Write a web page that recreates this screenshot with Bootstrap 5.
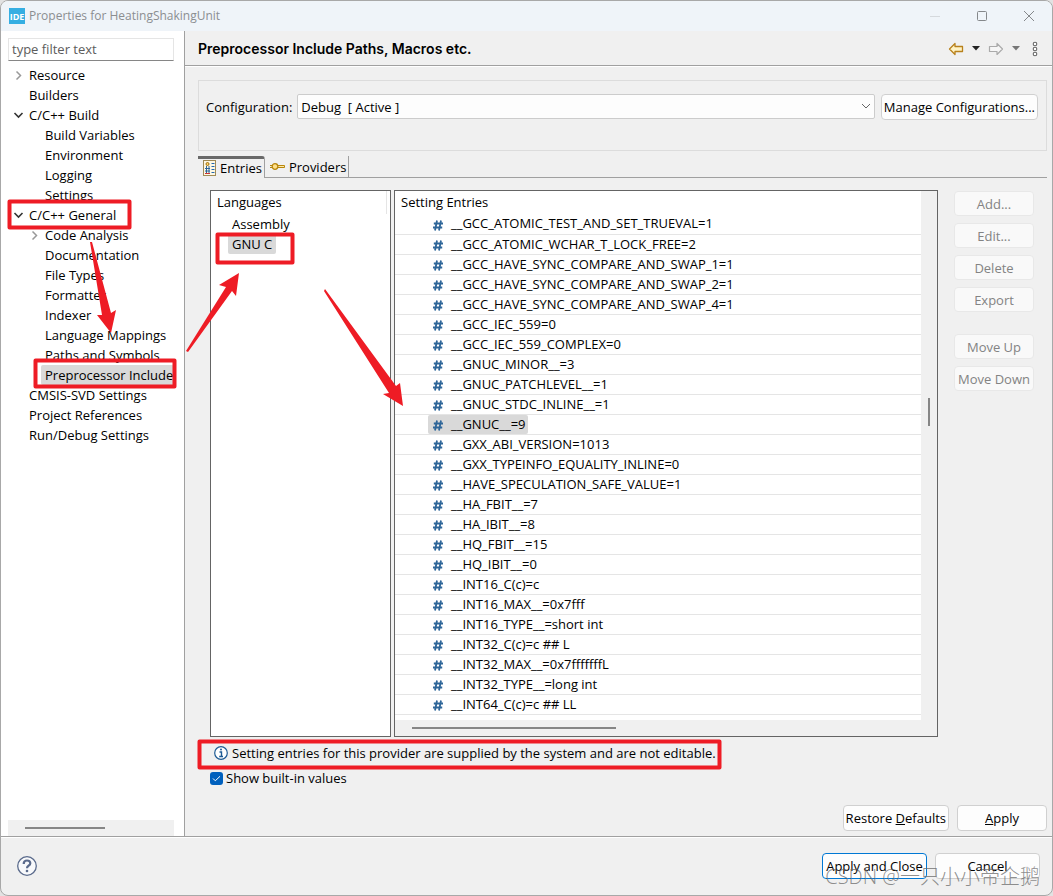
<!DOCTYPE html>
<html lang="en">
<head>
<meta charset="utf-8">
<meta name="viewport" content="width=device-width, initial-scale=1">
<title>Properties for HeatingShakingUnit</title>
<link href="https://cdn.jsdelivr.net/npm/bootstrap@5.3.0/dist/css/bootstrap.min.css" rel="stylesheet">
<style>
body{font:13px/20px "Open Sans","Noto Sans CJK SC",sans-serif;color:#000;background:#e2e2e2}
.dialog{min-height:100vh;background:#f0f0f0;border:1px solid #a8a8a8;border-radius:8px;overflow:hidden}
.titlebar{height:30px;background:#eff4f9;color:#8b8e91;font-size:12px;padding:0 17px 0 8px}
.ide{width:16px;height:16px;background:#35aee2}
.winbtns{gap:35px}
.winbtns button,.toolbtns button{border:0;background:none;padding:0;display:flex;align-items:center;justify-content:center}
.side{width:184px;background:#fff;border-right:1px solid #a0a0a0;padding:7px 10px 0 7px}
.filter{height:23px;border:1px solid #e5e5e5;border-bottom-color:#868686;padding:0 3px 1px;width:100%;color:#000}
.filter::placeholder{color:#5c5c5c;opacity:1}
.tree,.tree ul,.langs{list-style:none;margin:0;padding:0}
.tree{margin-top:4px;white-space:nowrap}
.tree a{display:flex;align-items:center;height:20px;color:#000;text-decoration:none;padding-left:4px}
.tree ul a{padding-left:20px}
.tree svg,.tree i{width:13px;height:12px;margin-right:4px;flex:none}
.tree ul .picked{padding-left:0;margin-left:33px}
.picked span{background:#d9d9d9;border-radius:2px}
.tree .picked span{padding:0 4px;width:100%;overflow:hidden}
.hbar{height:16px;background:#f0f0f0;padding:7px 17px}
.hbar div{height:2px;background:#868686}
.main-head{height:35px;border-bottom:1px solid #a0a0a0;box-shadow:0 1px #fff;padding:1px 14px 0 13px}
.main-head h1{font:600 14px/20px Inter,sans-serif;margin:0}
.content{padding:14px 5px 5px 13px}
.cfg{border:1px solid #dcdcdc;height:71px;padding:0 8px 18px 7px}
.cfg select{height:25px;border:1px solid #ccc;border-radius:2px;background:#fdfdfd;padding:0 0 0 3px;appearance:none;width:100%}
.pick{margin:0 6px 0 5px}
.pick svg{position:absolute;right:4px;top:8px;pointer-events:none}
.push{height:26px;border:1px solid #d0d0d0;border-radius:4px;background:#fdfdfd;color:#000;padding:0 2px;font-size:13px;line-height:20px;white-space:nowrap}
.push:disabled{color:#838383;background:#f9f9f9;border-color:#e8e8e8}
.push.default{border-color:#0078d4}
.w-side{width:80px;padding:0;height:25px}
.tabs{margin-top:5px;height:22px}
.tabs button{border:0;background:none;padding:0 2px 0 5px;display:flex;align-items:center;gap:3px;white-space:nowrap}
.tabs .on{border-top:3px solid #696969;border-right:1px solid #a0a0a0;border-radius:0 3px 0 0;padding-bottom:2px}
.tabs .off{border-right:1px solid #a0a0a0;border-bottom:1px solid #a0a0a0}
.tabs .rest{border-bottom:1px solid #a0a0a0}
.lists{margin-top:12px;padding:0 13px 0 12px}
.pane{border:1px solid #646464;background:#fff}
.langpane{width:181px}
.langhead{height:23px;padding:1px 6px;margin-right:3px;border-right:1px solid #e5e5e5}
.langs{padding-left:17px}
.langs span{padding:0 4px;display:inline-block;height:20px}
.entpane{margin:0 16px 0 3px}
.entries{width:100%;white-space:nowrap}
.entries th{height:23px;font-weight:400;padding:0 6px 1px}
.entries td{height:20px;padding:0 0 0 33px;border-bottom:1px solid #e5e5e5}
.entries td span{display:flex;width:fit-content;align-items:center;height:19px;line-height:19px;padding:0 2px 0 5px}
.entries svg{margin:3px 8px 0 0}
.vbar{width:16px;background:#f0f0f0;padding:207px 0 0 7px}
.vbar div{width:2px;height:28px;background:#868686}
.hbar.wide{padding-right:305px}
.acts{gap:7px;padding-top:1px}
.acts .lower{margin-top:15px}
.info{margin:6px 0 0 16px;height:20px;gap:4px}
.builtin{margin:5px 0 17px 12px;gap:3px}
.apply{width:90px}
.footbtn{width:105px}
.check{width:13px;height:13px;appearance:none;border-radius:3px;background:#0060bd url("data:image/svg+xml,%3Csvg xmlns='http://www.w3.org/2000/svg' viewBox='0 0 13 13'%3E%3Cpath d='M3 6.5l2.3 2.3L10 4.3' fill='none' stroke='%23fff'/%3E%3C/svg%3E")}
.foot{border-top:1px solid #a0a0a0;box-shadow:inset 0 1px #fff;height:59px;padding:0 12px 0 16px}
.marks{position:absolute;left:0;top:0;pointer-events:none}
.wm{position:absolute;right:13px;bottom:4px;font:300 20px/30px "Open Sans","Noto Sans CJK SC",sans-serif;color:#666b;pointer-events:none;white-space:nowrap}
</style>
</head>
<body class="position-relative">
<svg width="0" height="0" class="position-absolute"><defs>
<symbol id="hash" viewBox="0 0 10 11"><path d="M4 .5L2 10.5M8 .5L6 10.5M.8 3.500H10M0 7.500H9.200" stroke="#2f6699" stroke-width="1.8" fill="none"/></symbol>
<symbol id="open" viewBox="0 0 13 12"><path d="M2.500 4L6.500 8L10.500 4" fill="none" stroke="#333" stroke-width="1.6"/></symbol>
<symbol id="shut" viewBox="0 0 13 12"><path d="M4.500 2.500L8.500 6.500L4.500 10.500" fill="none" stroke="#999" stroke-width="1.5"/></symbol>
</defs></svg>
<div class="dialog d-flex flex-column">
<header class="titlebar d-flex align-items-center">
 <svg class="ide" viewBox="0 0 16 16"><text x="8" y="11.500" text-anchor="middle" font-family="Open Sans" font-weight="700" font-size="9" fill="#fff">IDE</text></svg>
 <span class="ms-1 me-auto">Properties for HeatingShakingUnit</span>
 <div class="winbtns d-flex">
  <button aria-label="Minimize"><svg width="12" height="12"><path d="M1 6.500H11" stroke="#d5d9dd"/></svg></button>
  <button aria-label="Maximize"><svg width="12" height="12"><rect x="1.500" y="1.500" width="9" height="9" rx="1" fill="none" stroke="#85888b"/></svg></button>
  <button aria-label="Close"><svg width="12" height="12"><path d="M1 1L11 11M11 1L1 11" stroke="#85888b"/></svg></button>
 </div>
</header>
<div class="d-flex flex-grow-1">
 <aside class="side d-flex flex-column flex-shrink-0">
  <input class="filter" placeholder="type filter text" aria-label="Filter">
  <ul class="tree flex-grow-1">
   <li><a href="#"><svg><use href="#shut"/></svg>Resource</a></li>
   <li><a href="#"><i></i>Builders</a></li>
   <li><a href="#"><svg><use href="#open"/></svg>C/C++ Build</a>
    <ul><li><a href="#"><i></i>Build Variables</a></li><li><a href="#"><i></i>Environment</a></li><li><a href="#"><i></i>Logging</a></li><li><a href="#"><i></i>Settings</a></li></ul></li>
   <li><a href="#"><svg><use href="#open"/></svg>C/C++ General</a>
    <ul><li><a href="#"><svg><use href="#shut"/></svg>Code Analysis</a></li><li><a href="#"><i></i>Documentation</a></li><li><a href="#"><i></i>File Types</a></li><li><a href="#"><i></i>Formatter</a></li><li><a href="#"><i></i>Indexer</a></li><li><a href="#"><i></i>Language Mappings</a></li><li><a href="#"><i></i>Paths and Symbols</a></li><li><a href="#" class="picked"><span>Preprocessor Include</span></a></li></ul></li>
   <li><a href="#"><i></i>CMSIS-SVD Settings</a></li>
   <li><a href="#"><i></i>Project References</a></li>
   <li><a href="#"><i></i>Run/Debug Settings</a></li>
  </ul>
  <div class="hbar"><div style="width:80px"></div></div>
 </aside>
 <main class="flex-grow-1 d-flex flex-column">
  <div class="main-head d-flex align-items-center">
   <h1 class="me-auto">Preprocessor Include Paths, Macros etc.</h1>
   <div class="toolbtns d-flex align-items-center">
    <button aria-label="Back"><svg width="16" height="14"><path d="M1.500 7L7 1.500V4.500H14.500V9.500H7V12.500Z" fill="#fff3c4" stroke="#b8811c" stroke-width="1.3" stroke-linejoin="round"/></svg></button>
    <button class="ms-2" aria-label="Back history"><svg width="8" height="5"><path d="M0 0H8L4 4.500Z" fill="#222"/></svg></button>
    <button class="ms-2" aria-label="Forward"><svg width="16" height="14"><path d="M14.500 7L9 1.500V4.500H1.500V9.500H9V12.500Z" fill="#f6f6f6" stroke="#aaa" stroke-width="1.2" stroke-linejoin="round"/></svg></button>
    <button class="ms-2 me-1" aria-label="Forward history"><svg width="8" height="5"><path d="M0 0H8L4 4.500Z" fill="#777"/></svg></button>
    <button class="ms-2" aria-label="Menu"><svg width="6" height="16"><g fill="#fff" stroke="#666" stroke-width="1.1"><circle cx="3" cy="3" r="1.8"/><circle cx="3" cy="8" r="1.8"/><circle cx="3" cy="13" r="1.8"/></g></svg></button>
   </div>
  </div>
  <div class="content flex-grow-1 d-flex flex-column">
   <div class="cfg d-flex align-items-center">
    <label for="cfg">Configuration:</label>
    <div class="pick flex-grow-1 position-relative"><select id="cfg"><option>Debug&nbsp; [ Active ]</option></select><svg width="10" height="9"><path d="M1 2L5 6L9 2" fill="none" stroke="#666"/></svg></div>
    <button class="push">Manage Configurations...</button>
   </div>
   <div class="tabs d-flex align-items-stretch">
    <button class="on"><svg width="14" height="16"><rect x=".5" y=".5" width="12" height="15" fill="#fdf8e4" stroke="#a08a55"/><circle cx="4.500" cy="4" r="1.5" fill="#ffd667" stroke="#a06f10"/><path d="M3.500 6V14M6 6V14M2 8.500H7M2 11H7" stroke="#2f6699"/><path d="M2 13.500H7" stroke="#c33"/><path d="M8.500 3.500H11.500M8.500 6.500H11.500M8.500 9.500H11.500M8.500 12.500H11.500" stroke="#2268b0"/></svg>Entries</button>
    <button class="off"><svg width="16" height="9"><path d="M8 3.500H14.500V5.500H8" fill="#ffe9a8" stroke="#b8860b"/><path d="M0 3.500H3M0 5.500H3" stroke="#b8860b"/><circle cx="5" cy="4.500" r="2.8" fill="#ffe08a" stroke="#b8860b" stroke-width="1.3"/></svg>Providers</button>
    <div class="rest flex-grow-1"></div>
   </div>
   <div class="d-flex flex-grow-1 lists">
    <section class="pane langpane flex-shrink-0"><div class="langhead">Languages</div>
     <ul class="langs"><li><span>Assembly</span></li><li class="picked"><span>GNU C</span></li></ul></section>
    <section class="pane flex-grow-1 d-flex entpane">
     <div class="flex-grow-1 d-flex flex-column">
      <table class="entries"><thead><tr><th scope="col">Setting Entries</th></tr></thead><tbody id="rows"></tbody></table>
      <div class="hbar wide mt-auto"><div></div></div>
     </div>
     <div class="vbar"><div></div></div>
    </section>
    <div class="d-flex flex-column acts">
     <button class="push w-side" disabled>Add...</button><button class="push w-side" disabled>Edit...</button><button class="push w-side" disabled>Delete</button><button class="push w-side" disabled>Export</button>
     <button class="push w-side lower" disabled>Move Up</button><button class="push w-side" disabled>Move Down</button>
    </div>
   </div>
   <div class="info d-flex align-items-center"><svg width="14" height="14"><circle cx="7" cy="7" r="6.3" fill="#fff" stroke="#1d5a94" stroke-width="1.2"/><path d="M5.500 6H7.500V10.500M5.200 10.500H9" stroke="#1d5a94" stroke-width="1.4" fill="none"/><circle cx="7" cy="3.600" r="1" fill="#1d5a94"/></svg>Setting entries for this provider are supplied by the system and are not editable.</div>
   <div class="builtin d-flex align-items-center"><input type="checkbox" id="bi" class="check" checked><label for="bi">Show built-in values</label></div>
   <div class="d-flex justify-content-end gap-2 mt-auto"><button class="push">Restore <u>D</u>efaults</button><button class="push apply"><u>A</u>pply</button></div>
  </div>
 </main>
</div>
<footer class="foot d-flex align-items-center">
 <button class="border-0 bg-transparent p-0 me-auto d-flex" aria-label="Help"><svg width="20" height="20"><circle cx="10" cy="10" r="9.3" fill="#f8f9fb" stroke="#5b6b8c" stroke-width="1.3"/><path d="M6.700 8Q6.700 4.500 10 4.500Q13.300 4.500 13.300 7.300Q13.300 8.800 11.500 9.800Q10 10.700 10 12.200" fill="none" stroke="#5b6b8c" stroke-width="2.2"/><circle cx="10" cy="15" r="1.3" fill="#5b6b8c"/></svg></button>
 <div class="d-flex gap-2"><button class="push default footbtn">Apply and Close</button><button class="push footbtn">Cancel</button></div>
</footer>
</div>
<svg class="marks" width="730" height="780">
 <g fill="none" stroke="#ee1c25" stroke-width="4" stroke-linejoin="round"><rect x="9.500" y="201.500" width="120" height="26"/><rect x="35.500" y="360.500" width="139" height="26"/><rect x="217.500" y="234.500" width="75" height="28"/><rect x="199.500" y="741.500" width="520" height="26"/></g>
 <g fill="#ee1c25"><path d="M90 242L92 242L111 313L116 310L111 333L97 315L102 315Z"/><path d="M186 351L226 287L219 285L239 273L236 296L232 291L188 352Z"/><path d="M325 289L396 386L400 383L403 406L383 394L389 393L324 291Z"/></g>
</svg>
<div class="wm">CSDN @一只小小帝企鹅</div>
<script>
const entries=["__GCC_ATOMIC_TEST_AND_SET_TRUEVAL=1","__GCC_ATOMIC_WCHAR_T_LOCK_FREE=2","__GCC_HAVE_SYNC_COMPARE_AND_SWAP_1=1","__GCC_HAVE_SYNC_COMPARE_AND_SWAP_2=1","__GCC_HAVE_SYNC_COMPARE_AND_SWAP_4=1","__GCC_IEC_559=0","__GCC_IEC_559_COMPLEX=0","__GNUC_MINOR__=3","__GNUC_PATCHLEVEL__=1","__GNUC_STDC_INLINE__=1","__GNUC__=9","__GXX_ABI_VERSION=1013","__GXX_TYPEINFO_EQUALITY_INLINE=0","__HAVE_SPECULATION_SAFE_VALUE=1","__HA_FBIT__=7","__HA_IBIT__=8","__HQ_FBIT__=15","__HQ_IBIT__=0","__INT16_C(c)=c","__INT16_MAX__=0x7fff","__INT16_TYPE__=short int","__INT32_C(c)=c ## L","__INT32_MAX__=0x7fffffffL","__INT32_TYPE__=long int","__INT64_C(c)=c ## LL"];
document.getElementById("rows").innerHTML=entries.map(e=>`<tr><td${e==="__GNUC__=9"?' class="picked"':""}><span><svg width="10" height="11"><use href="#hash"/></svg>${e}</span></td></tr>`).join("");
</script>
<script src="https://cdn.jsdelivr.net/npm/bootstrap@5.3.0/dist/js/bootstrap.bundle.min.js"></script>
</body>
</html>
